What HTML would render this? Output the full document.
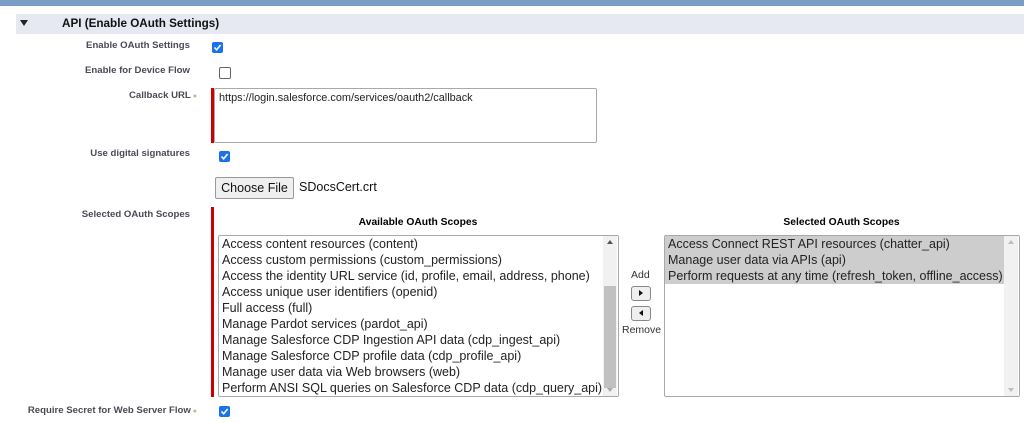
<!DOCTYPE html>
<html><head><style>
body{margin:0;width:1024px;height:423px;overflow:hidden;background:#fff;font-family:"Liberation Sans",Arial,sans-serif;position:relative}
.a{position:absolute}
.top{left:0;top:0;width:1024px;height:6px;background:#7a9cc6}
.lbl{font-size:9.6px;font-weight:bold;color:#4a4a56;text-align:right;width:190px;left:0}
.cb{width:11px;height:11px;border-radius:2px;background:#1a73e8;box-sizing:border-box}
.cb svg{display:block}
.cbe{width:12px;height:12px;border:1px solid #666;border-radius:2px;box-sizing:border-box;background:#fff}
.req{background:#c00;width:3px}
.list{border:1px solid #a9a9a9;border-radius:2px;background:#fff;box-sizing:border-box;font-size:12.5px;color:#222;line-height:16px;overflow:hidden;white-space:nowrap}
.sb{background:#f1f1f1;width:14px}
.h{font-size:10.3px;font-weight:bold;color:#000;text-align:center}
.btn{width:20px;height:15px;border:1px solid #888;border-radius:3px;background:#efefef;box-sizing:border-box}
</style></head><body>
<div class="a top"></div>
<div class="a" style="left:16px;top:14px;width:1008px;height:20px;background:#e6e9f2"></div>
<div class="a" style="left:20px;top:20px;width:0;height:0;border-left:4px solid transparent;border-right:4px solid transparent;border-top:6px solid #222"></div>
<div class="a" style="left:62px;top:15px;font-size:11.7px;font-weight:bold;color:#111;line-height:18px">API (Enable OAuth Settings)</div>

<div class="a lbl" style="top:40px">Enable OAuth Settings</div>
<div class="a cb" style="left:212px;top:42px"><svg width="11" height="11"><path d="M2.5 5.5L4.6 7.8L8.6 3" stroke="#fff" stroke-width="1.6" fill="none"/></svg></div>
<div class="a lbl" style="top:65px">Enable for Device Flow</div>
<div class="a cbe" style="left:219px;top:67px"></div>
<div class="a lbl" style="top:90px;width:197px">Callback URL<span style="color:#c8b38a;font-size:7px"> ●</span></div>
<div class="a req" style="left:211px;top:88px;height:55px"></div>
<div class="a" style="left:214px;top:88px;width:383px;height:55px;border:1px solid #a9a9a9;border-radius:2px;box-sizing:border-box;font-size:10.9px;color:#222;padding:3px 4px">https://login.salesforce.com/services/oauth2/callback</div>
<div class="a lbl" style="top:148px">Use digital signatures</div>
<div class="a cb" style="left:219px;top:151px"><svg width="11" height="11"><path d="M2.5 5.5L4.6 7.8L8.6 3" stroke="#fff" stroke-width="1.6" fill="none"/></svg></div>
<div class="a" style="left:215px;top:177px;width:79px;height:22px;border:1px solid #999;border-radius:2px;background:#efefef;box-sizing:border-box;font-size:12.5px;text-align:center;line-height:20px;color:#111">Choose File</div>
<div class="a" style="left:299px;top:180px;font-size:12.5px;color:#111">SDocsCert.crt</div>

<div class="a lbl" style="top:209px">Selected OAuth Scopes</div>
<div class="a req" style="left:211px;top:207px;height:190px"></div>
<div class="a h" style="left:218px;top:217px;width:400px">Available OAuth Scopes</div>
<div class="a list" style="left:218px;top:235px;width:401px;height:162px;padding:0 0 0 3px">
Access content resources (content)<br>Access custom permissions (custom_permissions)<br>Access the identity URL service (id, profile, email, address, phone)<br>Access unique user identifiers (openid)<br>Full access (full)<br>Manage Pardot services (pardot_api)<br>Manage Salesforce CDP Ingestion API data (cdp_ingest_api)<br>Manage Salesforce CDP profile data (cdp_profile_api)<br>Manage user data via Web browsers (web)<br>Perform ANSI SQL queries on Salesforce CDP data (cdp_query_api)</div>
<div class="a sb" style="left:603px;top:236px;height:160px"></div>
<div class="a" style="left:604px;top:286px;width:12px;height:102px;background:#c1c1c1"></div>
<div class="a" style="left:607px;top:240px;border-left:3px solid transparent;border-right:3px solid transparent;border-bottom:4px solid #555"></div>
<div class="a" style="left:607px;top:388px;border-left:3px solid transparent;border-right:3px solid transparent;border-top:4px solid #aaa"></div>

<div class="a" style="left:631px;top:269px;font-size:10.5px;color:#333">Add</div>
<div class="a btn" style="left:631px;top:286px"><div class="a" style="left:7px;top:3px;border-top:3.5px solid transparent;border-bottom:3.5px solid transparent;border-left:4px solid #111"></div></div>
<div class="a btn" style="left:631px;top:306px"><div class="a" style="left:7px;top:3px;border-top:3.5px solid transparent;border-bottom:3.5px solid transparent;border-right:4px solid #111"></div></div>
<div class="a" style="left:622px;top:324px;font-size:10.5px;color:#333">Remove</div>

<div class="a h" style="left:664px;top:217px;width:355px">Selected OAuth Scopes</div>
<div class="a list" style="left:664px;top:235px;width:356px;height:162px"></div>
<div class="a" style="left:665px;top:236px;width:339px;height:48px;background:#cdcdcd;font-size:12.5px;color:#222;line-height:16px;padding-left:3px;box-sizing:border-box;white-space:nowrap;overflow:hidden">Access Connect REST API resources (chatter_api)<br>Manage user data via APIs (api)<br>Perform requests at any time (refresh_token, offline_access)</div>
<div class="a sb" style="left:1004px;top:236px;height:160px"></div>
<div class="a" style="left:1008px;top:240px;border-left:3px solid transparent;border-right:3px solid transparent;border-bottom:4px solid #bbb"></div>
<div class="a" style="left:1008px;top:388px;border-left:3px solid transparent;border-right:3px solid transparent;border-top:4px solid #bbb"></div>

<div class="a lbl" style="top:405px;width:197px">Require Secret for Web Server Flow<span style="color:#c8b38a;font-size:7px"> ●</span></div>
<div class="a cb" style="left:219px;top:406px"><svg width="11" height="11"><path d="M2.5 5.5L4.6 7.8L8.6 3" stroke="#fff" stroke-width="1.6" fill="none"/></svg></div>
</body></html>
